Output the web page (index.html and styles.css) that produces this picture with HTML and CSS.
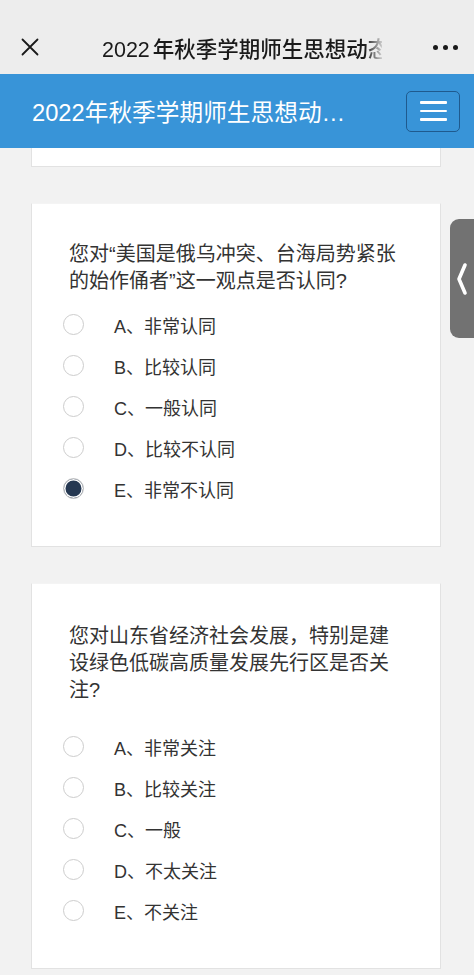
FILE: index.html
```html
<!DOCTYPE html>
<html lang="zh-CN">
<head>
<meta charset="utf-8">
<title>2022年秋季学期师生思想动态</title>
<link rel="stylesheet" href="styles.css">
</head>
<body>
<header class="wx-bar">
  <div class="wx-close">
    <svg width="18" height="18" viewBox="0 0 18 18"><path d="M1.5 1.5 L16.5 16.5 M16.5 1.5 L1.5 16.5" stroke="#1a1a1a" stroke-width="1.8" fill="none" stroke-linecap="round"/></svg>
  </div>
  <div class="wx-title-wrap"><div class="wx-title">2022<span class="gap"></span>年秋季学期师生思想动态</div></div>
  <div class="wx-more"><span></span><span></span><span></span></div>
</header>
<nav class="navbar">
  <div class="nav-title">2022年秋季学期师生思想动…</div>
  <button class="nav-toggle" type="button"><span></span><span></span><span></span></button>
</nav>
<main class="content">
  <div class="card card-tail"></div>
  <section class="card">
    <div class="question">您对“美国是俄乌冲突、台海局势紧张的始作俑者”这一观点是否认同?</div>
    <div class="options">
      <div class="option"><span class="radio"></span><span class="label">A、非常认同</span></div>
      <div class="option"><span class="radio"></span><span class="label">B、比较认同</span></div>
      <div class="option"><span class="radio"></span><span class="label">C、一般认同</span></div>
      <div class="option"><span class="radio"></span><span class="label">D、比较不认同</span></div>
      <div class="option"><span class="radio checked"></span><span class="label">E、非常不认同</span></div>
    </div>
  </section>
  <section class="card card-alt">
    <div class="question">您对山东省经济社会发展，特别是建设绿色低碳高质量发展先行区是否关注?</div>
    <div class="options">
      <div class="option"><span class="radio"></span><span class="label">A、非常关注</span></div>
      <div class="option"><span class="radio"></span><span class="label">B、比较关注</span></div>
      <div class="option"><span class="radio"></span><span class="label">C、一般</span></div>
      <div class="option"><span class="radio"></span><span class="label">D、不太关注</span></div>
      <div class="option"><span class="radio"></span><span class="label">E、不关注</span></div>
    </div>
  </section>
</main>
<div class="side-tab">
  <svg width="12" height="34" viewBox="0 0 12 34"><path d="M9 3 L3 17 L9 31" stroke="#fff" stroke-width="3.6" fill="none" stroke-linecap="round" stroke-linejoin="round"/></svg>
</div>
</body>
</html>
```
FILE: styles.css
```css
* { box-sizing: border-box; }
html, body { margin: 0; padding: 0; }
body {
  width: 474px;
  min-height: 975px;
  background: #f2f2f2;
  font-family: "Liberation Sans", "Noto Sans CJK SC", sans-serif;
  color: #333;
  overflow: hidden;
}
.wx-bar {
  height: 74px;
  background: #ededed;
  padding-top: 20px;
  display: flex;
  align-items: center;
}
.wx-close {
  width: 58px;
  display: flex;
  justify-content: center;
  padding-left: 2px;
}
.wx-title-wrap {
  flex: 1;
  padding-left: 44px;
}
.wx-title {
  width: 280px;
  white-space: nowrap;
  overflow: hidden;
  font-size: 21.5px;
  font-weight: 500;
  color: #1a1a1a;
  -webkit-mask-image: linear-gradient(to right, #000 94%, rgba(0,0,0,0.15) 100%);
  mask-image: linear-gradient(to right, #000 94%, rgba(0,0,0,0.15) 100%);
}
.wx-title .gap {
  display: inline-block;
  width: 3px;
}
.wx-more {
  width: 58px;
  display: flex;
  gap: 5px;
  padding-left: 17px;
}
.wx-more span {
  width: 5px;
  height: 5px;
  border-radius: 50%;
  background: #1a1a1a;
}
.navbar {
  height: 74px;
  background: #3894d8;
  display: flex;
  align-items: center;
  justify-content: space-between;
  padding: 0 14px 0 32px;
}
.nav-title {
  color: #fff;
  font-size: 23.7px;
  white-space: nowrap;
}
.nav-toggle {
  width: 54px;
  height: 41px;
  border: 1.5px solid #1f5a8e;
  border-radius: 5px;
  background: #3894d8;
  display: flex;
  flex-direction: column;
  justify-content: center;
  align-items: center;
  gap: 6px;
  padding: 0;
}
.nav-toggle span {
  width: 27px;
  height: 2.5px;
  background: #fff;
  border-radius: 1px;
}
.content {
  padding: 0 33px 0 31px;
  display: flex;
  flex-direction: column;
  gap: 36px;
}
.card {
  background: #fff;
  border: 1px solid #e2e2e2;
  border-top-color: #f4f4f4;
  padding: 37px 38px 37px 31px;
}
.card-tail {
  height: 19px;
  padding: 0;
  border-top: none;
}
.card-alt { padding-top: 39px; }
.question {
  margin-left: 6px;
  font-size: 20px;
  line-height: 27px;
  color: #333;
}
.options {
  margin-top: 9px;
  display: flex;
  flex-direction: column;
}
.card-alt .options { margin-top: 22px; }
.option {
  height: 41px;
  display: flex;
  align-items: center;
  gap: 30px;
}
.radio {
  width: 21px;
  height: 21px;
  border-radius: 50%;
  border: 1.5px solid #cdcdcd;
  background: #fff;
  flex: none;
}
.radio.checked {
  background: #253852;
  box-shadow: inset 0 0 0 1.5px #fff;
  border-color: #cfcfcf;
}
.label {
  font-size: 18px;
  color: #333;
}
.side-tab {
  position: absolute;
  left: 450px;
  top: 219px;
  width: 30px;
  height: 119px;
  background: #727272;
  border-radius: 9px 0 0 9px;
  display: flex;
  align-items: center;
  padding-left: 6px;
}
```
